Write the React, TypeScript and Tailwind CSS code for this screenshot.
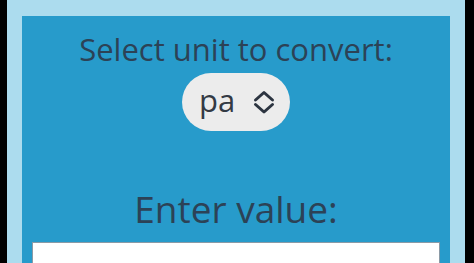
export default function App() {
  return (
    <div className="w-[474px] h-[263px] bg-black overflow-hidden flex">
      <div className="w-[7px] shrink-0 bg-black"></div>
      <div className="w-[458px] shrink-0 h-full bg-[#acdcee] px-[15px] pt-[16px]">
        <div
          className="h-[300px] bg-[#279bcb] flex flex-col items-center text-[#2c4256]"
          style={{ fontFamily: '"Open Sans", sans-serif' }}
        >
          <div className="mt-[11px] text-[31px] leading-[44px]">Select unit to convert:</div>
          <div className="mt-[2px] w-[108px] h-[58px] rounded-full bg-[#ececec] flex items-center pl-[17px] text-[31px] text-[#333a44]">
            <span className="leading-none -mt-[3px] w-[36px]">pa</span>
            <svg className="ml-[18px]" width="22" height="26" viewBox="0 0 22 26" fill="none" stroke="#2c3440" strokeWidth="3" strokeLinecap="round" strokeLinejoin="round">
              <path d="M2.5 11 L11 3.5 L19.5 11" />
              <path d="M2.5 15.5 L11 23 L19.5 15.5" />
            </svg>
          </div>
          <div className="mt-[54px] text-[37px] leading-[48px]">Enter value:</div>
          <div className="mt-[9px] self-start ml-[10px] w-[408px] h-[40px] bg-white border border-[#8a9aa6]"></div>
        </div>
      </div>
      <div className="flex-1 bg-black"></div>
    </div>
  );
}
